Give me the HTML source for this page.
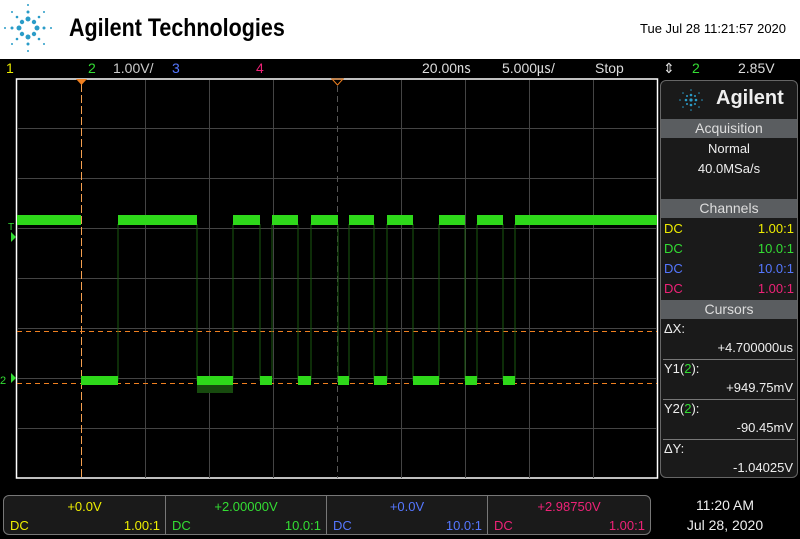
<!DOCTYPE html>
<html><head><meta charset="utf-8"><style>
body{margin:0;width:800px;height:539px;background:#000;overflow:hidden;position:relative;font-family:"Liberation Sans",sans-serif}
.a{position:absolute;white-space:nowrap}
.hd{position:absolute;left:0;top:0;width:800px;height:59px;background:#fff}
.t{font-size:14px;top:59px;line-height:18px}
.panel{position:absolute;left:660px;top:80px;width:138px;height:398px;background:#1a1a1a;border:1px solid #666;border-radius:6px;box-sizing:border-box}
.ph{position:absolute;left:0;width:136px;height:19px;background:#5a5d60;color:#ddd;text-align:center;font-size:14px;line-height:19px}
.pt{position:absolute;font-size:13px;color:#eee;white-space:nowrap}
.sep{position:absolute;left:2px;width:132px;height:1px;background:#777}
.bb{position:absolute;top:495px;height:40px;background:#1a1a1a;border:1px solid #777;box-sizing:border-box}
.bt{position:absolute;font-size:13px;white-space:nowrap}
</style></head><body>
<div class="hd"></div>
<svg class="a" style="left:0;top:0" width="60" height="58" viewBox="0 0 60 58">
<g fill="#2a9cc8">
<circle cx="28" cy="19" r="2.5"/><circle cx="28" cy="37" r="2.5"/><circle cx="19" cy="28" r="2.5"/><circle cx="37" cy="28" r="2.5"/>
<circle cx="22" cy="22" r="2.2"/><circle cx="34" cy="22" r="2.2"/><circle cx="22" cy="34" r="2.2"/><circle cx="34" cy="34" r="2.2"/>
<circle cx="28" cy="12" r="1.5"/><circle cx="28" cy="44" r="1.5"/><circle cx="12" cy="28" r="1.5"/><circle cx="44" cy="28" r="1.5"/>
<circle cx="17" cy="17" r="1.3"/><circle cx="39" cy="17" r="1.3"/><circle cx="17" cy="39" r="1.3"/><circle cx="39" cy="39" r="1.3"/>
<circle cx="28" cy="5" r="1"/><circle cx="28" cy="51" r="1"/><circle cx="5" cy="28" r="1"/><circle cx="51" cy="28" r="1"/>
<circle cx="12" cy="12" r="1"/><circle cx="44" cy="12" r="1"/><circle cx="12" cy="44" r="1"/><circle cx="44" cy="44" r="1"/>
</g></svg>
<div class="a" style="left:69px;top:14px;font-size:25px;font-weight:bold;color:#000;transform:scaleX(0.86);transform-origin:0 0">Agilent Technologies</div>
<div class="a" style="left:640px;top:21px;font-size:13px;color:#000">Tue Jul 28 11:21:57 2020</div>

<div class="a t" style="left:6px;color:#ee0">1</div>
<div class="a t" style="left:88px;color:#3d3">2</div>
<div class="a t" style="left:113px;color:#ccc">1.00V/</div>
<div class="a t" style="left:172px;color:#57f">3</div>
<div class="a t" style="left:256px;color:#e27">4</div>
<div class="a t" style="left:422px;color:#ddd">20.00㎱</div>
<div class="a t" style="left:502px;color:#ddd">5.000㎲/</div>
<div class="a t" style="left:595px;color:#ddd">Stop</div>
<div class="a t" style="left:663px;color:#ddd">⇕</div>
<div class="a t" style="left:692px;color:#3d3">2</div>
<div class="a t" style="left:738px;color:#ddd">2.85V</div>

<svg class="a" style="left:0;top:78px" width="660" height="402">
<rect x="16.5" y="1" width="641" height="399" fill="none" stroke="#fff" stroke-width="1.5"/>
<g stroke="#444" stroke-width="1">
<line x1="145.5" y1="2" x2="145.5" y2="400"/><line x1="209.5" y1="2" x2="209.5" y2="400"/><line x1="273.5" y1="2" x2="273.5" y2="400"/>
<line x1="401.5" y1="2" x2="401.5" y2="400"/><line x1="465.5" y1="2" x2="465.5" y2="400"/><line x1="529.5" y1="2" x2="529.5" y2="400"/><line x1="593.5" y1="2" x2="593.5" y2="400"/>
<line x1="17" y1="50.5" x2="657" y2="50.5"/><line x1="17" y1="100.5" x2="657" y2="100.5"/><line x1="17" y1="150.5" x2="657" y2="150.5"/>
<line x1="17" y1="200.5" x2="657" y2="200.5"/><line x1="17" y1="250.5" x2="657" y2="250.5"/><line x1="17" y1="300.5" x2="657" y2="300.5"/><line x1="17" y1="350.5" x2="657" y2="350.5"/>
</g>
<line x1="337.5" y1="8" x2="337.5" y2="400" stroke="#555" stroke-dasharray="6,4"/>
<line x1="81.5" y1="6" x2="81.5" y2="400" stroke="#f5a050" stroke-dasharray="8,3"/>
<polygon points="76,1 87,1 81.5,7" fill="#f08020"/>
<polygon points="332,1 343,1 337.5,7" fill="none" stroke="#f08020"/>
<line x1="17" y1="253.5" x2="657" y2="253.5" stroke="#f08020" stroke-dasharray="5,4"/>
<line x1="17" y1="305.5" x2="657" y2="305.5" stroke="#f08020" stroke-dasharray="5,4"/>
<g stroke="#1a5a10" stroke-width="1">
<line x1="118" y1="146" x2="118" y2="303"/><line x1="197" y1="146" x2="197" y2="303"/><line x1="233" y1="146" x2="233" y2="303"/><line x1="260" y1="146" x2="260" y2="303"/><line x1="272" y1="146" x2="272" y2="303"/><line x1="298" y1="146" x2="298" y2="303"/><line x1="311" y1="146" x2="311" y2="303"/><line x1="338" y1="146" x2="338" y2="303"/><line x1="349" y1="146" x2="349" y2="303"/><line x1="374" y1="146" x2="374" y2="303"/><line x1="387" y1="146" x2="387" y2="303"/><line x1="413" y1="146" x2="413" y2="303"/><line x1="439" y1="146" x2="439" y2="303"/><line x1="465" y1="146" x2="465" y2="303"/><line x1="477" y1="146" x2="477" y2="303"/><line x1="503" y1="146" x2="503" y2="303"/><line x1="515" y1="146" x2="515" y2="303"/>
</g>
<g fill="#2ed81a">
<rect x="17" y="137" width="64" height="10"/><rect x="118" y="137" width="79" height="10"/><rect x="233" y="137" width="27" height="10"/><rect x="272" y="137" width="26" height="10"/><rect x="311" y="137" width="27" height="10"/><rect x="349" y="137" width="25" height="10"/><rect x="387" y="137" width="26" height="10"/><rect x="439" y="137" width="26" height="10"/><rect x="477" y="137" width="26" height="10"/><rect x="515" y="137" width="142" height="10"/>
<rect x="81" y="298" width="37" height="9"/><rect x="197" y="298" width="36" height="9"/><rect x="260" y="298" width="12" height="9"/><rect x="298" y="298" width="13" height="9"/><rect x="338" y="298" width="11" height="9"/><rect x="374" y="298" width="13" height="9"/><rect x="413" y="298" width="26" height="9"/><rect x="465" y="298" width="12" height="9"/><rect x="503" y="298" width="12" height="9"/>
</g>
<rect x="197" y="307" width="36" height="8" fill="#174a0e"/>
<g fill="#3d3"><polygon points="11,154 16,159 11,164"/><polygon points="11,295 16,300 11,305"/></g>
<text x="8" y="152" fill="#3d3" font-size="10" font-family="Liberation Sans">T</text>
<text x="0" y="306" fill="#3d3" font-size="11" font-family="Liberation Sans">2</text>
</svg>

<div class="panel">
<svg class="a" style="left:16px;top:6px" width="28" height="26" viewBox="0 0 28 26"><g fill="#2a9cc8"><circle cx="14" cy="13" r="1.6"/><circle cx="14" cy="8" r="1.3"/><circle cx="14" cy="18" r="1.3"/><circle cx="9" cy="13" r="1.3"/><circle cx="19" cy="13" r="1.3"/><circle cx="10" cy="9" r="1"/><circle cx="18" cy="9" r="1"/><circle cx="10" cy="17" r="1"/><circle cx="18" cy="17" r="1"/><circle cx="14" cy="3" r=".8"/><circle cx="14" cy="23" r=".8"/><circle cx="3" cy="13" r=".8"/><circle cx="25" cy="13" r=".8"/><circle cx="6" cy="6" r=".8"/><circle cx="22" cy="6" r=".8"/><circle cx="6" cy="20" r=".8"/><circle cx="22" cy="20" r=".8"/></g></svg>
<div class="a" style="left:55px;top:6px;font-size:20px;font-weight:bold;color:#eee">Agilent</div>
<div class="ph" style="top:38px">Acquisition</div>
<div class="pt" style="left:0;width:136px;text-align:center;top:60px">Normal</div>
<div class="pt" style="left:0;width:136px;text-align:center;top:80px">40.0MSa/s</div>
<div class="ph" style="top:118px">Channels</div>
<div class="pt" style="left:3px;top:140px;color:#ee0">DC</div><div class="pt" style="right:3px;top:140px;color:#ee0">1.00:1</div>
<div class="pt" style="left:3px;top:160px;color:#3d3">DC</div><div class="pt" style="right:3px;top:160px;color:#3d3">10.0:1</div>
<div class="pt" style="left:3px;top:180px;color:#57f">DC</div><div class="pt" style="right:3px;top:180px;color:#57f">10.0:1</div>
<div class="pt" style="left:3px;top:200px;color:#e27">DC</div><div class="pt" style="right:3px;top:200px;color:#e27">1.00:1</div>
<div class="ph" style="top:219px">Cursors</div>
<div class="pt" style="left:3px;top:240px">ΔX:</div><div class="pt" style="right:4px;top:259px">+4.700000us</div>
<div class="sep" style="top:278px"></div>
<div class="pt" style="left:3px;top:280px">Y1(<span style="color:#3d3">2</span>):</div><div class="pt" style="right:4px;top:299px">+949.75mV</div>
<div class="sep" style="top:318px"></div>
<div class="pt" style="left:3px;top:320px">Y2(<span style="color:#3d3">2</span>):</div><div class="pt" style="right:4px;top:339px">-90.45mV</div>
<div class="sep" style="top:358px"></div>
<div class="pt" style="left:3px;top:360px">ΔY:</div><div class="pt" style="right:4px;top:379px">-1.04025V</div>
</div>

<div class="bb" style="left:3px;width:163px;border-radius:6px 0 0 6px"><div class="bt" style="left:0;width:161px;text-align:center;top:3px;color:#ee0">+0.0V</div><div class="bt" style="left:6px;top:22px;color:#ee0">DC</div><div class="bt" style="right:5px;top:22px;color:#ee0">1.00:1</div></div>
<div class="bb" style="left:165px;width:162px"><div class="bt" style="left:0;width:160px;text-align:center;top:3px;color:#3d3">+2.00000V</div><div class="bt" style="left:6px;top:22px;color:#3d3">DC</div><div class="bt" style="right:5px;top:22px;color:#3d3">10.0:1</div></div>
<div class="bb" style="left:326px;width:162px"><div class="bt" style="left:0;width:160px;text-align:center;top:3px;color:#57f">+0.0V</div><div class="bt" style="left:6px;top:22px;color:#57f">DC</div><div class="bt" style="right:5px;top:22px;color:#57f">10.0:1</div></div>
<div class="bb" style="left:487px;width:164px;border-radius:0 6px 6px 0"><div class="bt" style="left:0;width:162px;text-align:center;top:3px;color:#e27">+2.98750V</div><div class="bt" style="left:6px;top:22px;color:#e27">DC</div><div class="bt" style="right:5px;top:22px;color:#e27">1.00:1</div></div>
<div class="a" style="left:660px;width:130px;text-align:center;top:497px;font-size:14px;color:#eee">11:20 AM</div>
<div class="a" style="left:660px;width:130px;text-align:center;top:517px;font-size:14px;color:#eee">Jul 28, 2020</div>
</body></html>
